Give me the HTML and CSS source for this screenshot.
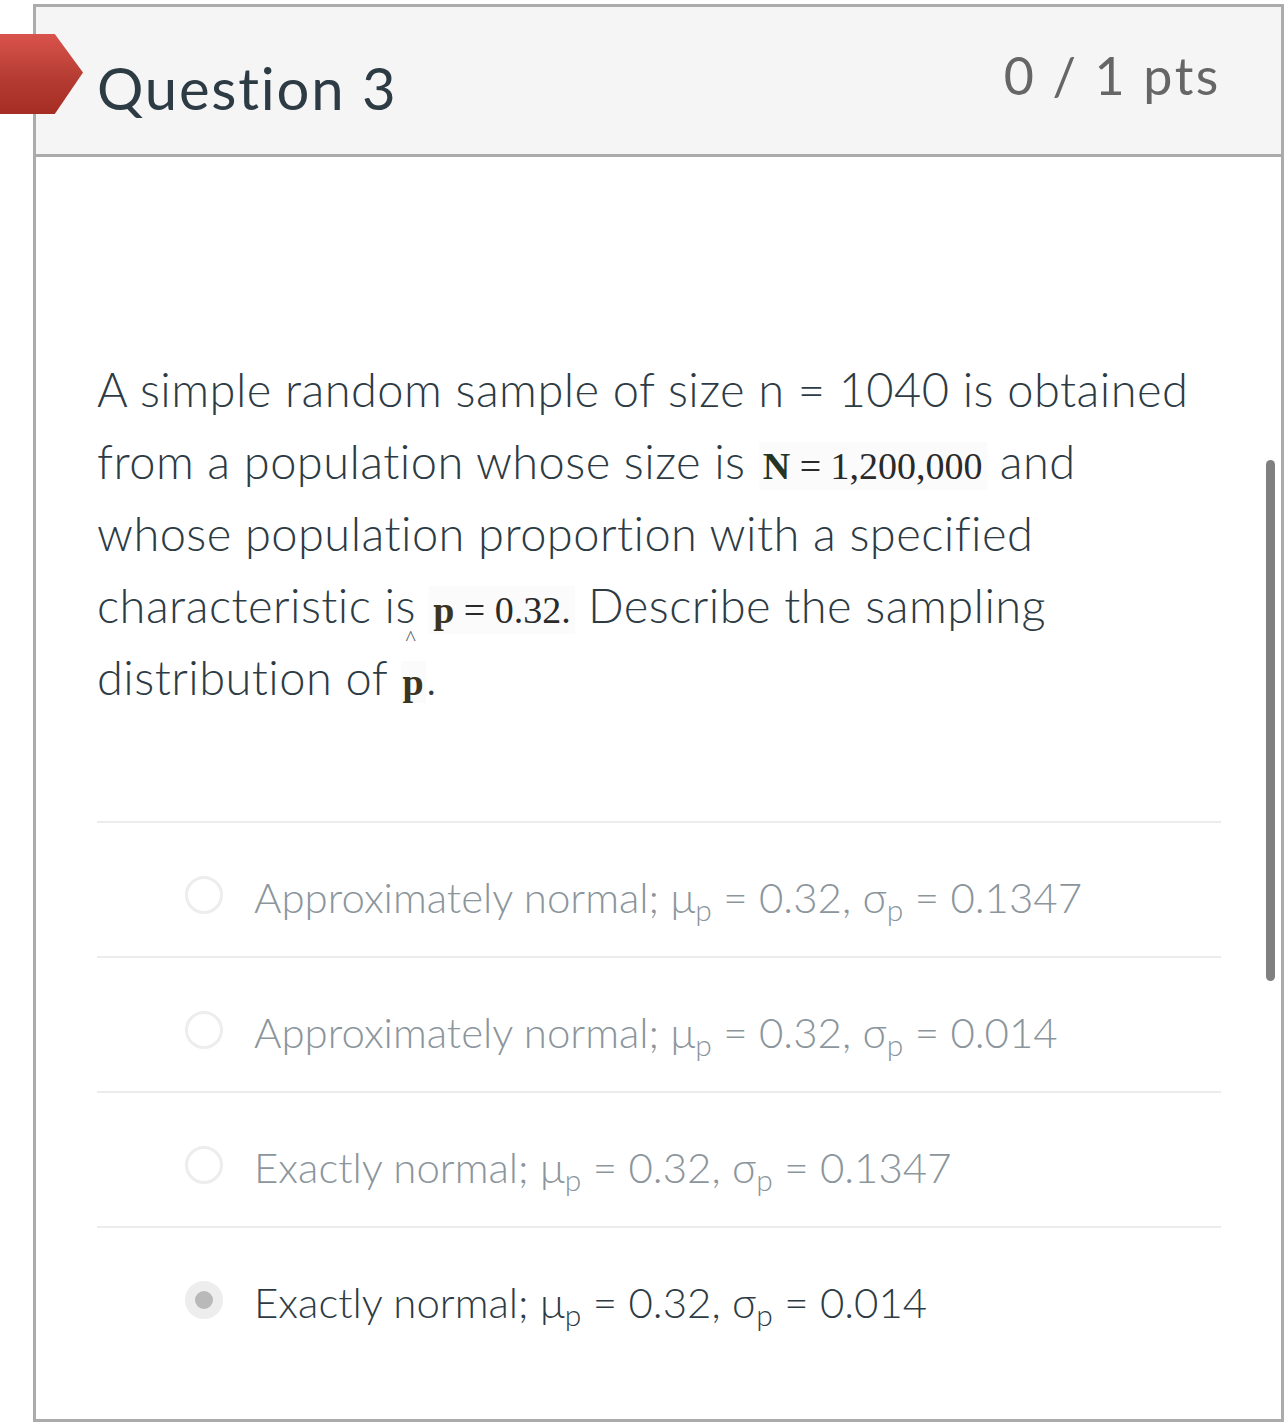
FILE: index.html
```html
<!DOCTYPE html>
<html>
<head>
<meta charset="utf-8">
<link rel="stylesheet" href="styles.css">
</head>
<body>
<div class="card">
  <div class="flag"></div>
  <div class="header">
    <div class="title">Question 3</div>
    <div class="pts">0 / 1 pts</div>
  </div>
  <div class="body">
    <p class="question">A simple random sample of size n = 1040 is obtained from a population whose size is <span class="math big"><b>N</b> = 1,200,000</span> and whose population proportion with a specified characteristic is <span class="math"><b class="pb">p</b> = 0.32.</span> Describe the sampling distribution of <span class="math hat"><b class="pb">p</b><span class="caret">^</span></span>.</p>
    <div class="answers">
      <div class="answer">
        <span class="radio"></span>
        <span class="label">Approximately normal; μ<sub>p</sub> = 0.32, σ<sub>p</sub> = 0.1347</span>
      </div>
      <div class="answer">
        <span class="radio"></span>
        <span class="label">Approximately normal; μ<sub>p</sub> = 0.32, σ<sub>p</sub> = 0.014</span>
      </div>
      <div class="answer">
        <span class="radio"></span>
        <span class="label">Exactly normal; μ<sub>p</sub> = 0.32, σ<sub>p</sub> = 0.1347</span>
      </div>
      <div class="answer selected">
        <span class="radio"><span class="dot"></span></span>
        <span class="label">Exactly normal; μ<sub>p</sub> = 0.32, σ<sub>p</sub> = 0.014</span>
      </div>
    </div>
  </div>
  <div class="scrollbar"></div>
</div>
</body>
</html>
```
FILE: styles.css
```css
html, body {
  margin: 0;
  padding: 0;
  background: #fff;
}
body {
  font-family: Lato, "Open Sans", sans-serif;
  color: #2d3b45;
}
.card {
  position: relative;
  margin: 4px 0 0 33px;
  width: 1251px;
  height: 1418px;
  box-sizing: border-box;
  border: 3px solid #ababab;
}
.flag {
  position: absolute;
  left: -36px;
  top: 27px;
  width: 83px;
  height: 80px;
  background: linear-gradient(#d9534c, #b23a30 60%, #a52d24);
  clip-path: polygon(0 0, 66% 0, 100% 48%, 66% 100%, 0 100%);
}
.header {
  height: 147px;
  background: #f5f5f5;
  border-bottom: 3px solid #ababab;
  display: flex;
  align-items: flex-start;
  justify-content: space-between;
  padding: 0 60px 0 61px;
}
.title {
  font-size: 58px;
  line-height: 60px;
  letter-spacing: 1.8px;
  margin-top: 51px;
  color: #2d3b45;
}
.pts {
  font-size: 52px;
  line-height: 60px;
  letter-spacing: 2.6px;
  margin-top: 38px;
  color: #666;
}
.body {
  padding: 196px 60px 0 61px;
}
.question {
  margin: 0;
  max-width: 1105px;
  font-size: 47px;
  line-height: 72px;
  font-weight: 300;
  letter-spacing: 0.45px;
}
.math {
  font-family: "Liberation Serif", serif;
  font-size: 38px;
  line-height: 1;
  letter-spacing: 0;
  color: #2a2a2a;
  background: #fbfbfb;
  padding: 3px 4px;
}
.math b { font-weight: 700; color: #243524; }
.math .pb { color: #3b3420; }
.hat {
  position: relative;
  padding: 0 2px;
}
.caret {
  position: absolute;
  left: 5px;
  top: -34px;
  font-size: 22px;
  color: #666;
}
.answers {
  margin-top: 108px;
}
.answer {
  border-top: 2px solid #ececec;
  height: 133px;
  display: flex;
  align-items: flex-start;
  padding-left: 88px;
}
.radio {
  box-sizing: border-box;
  width: 38px;
  height: 38px;
  border: 3px solid #ededed;
  border-radius: 50%;
  margin-top: 53px;
  flex: none;
  display: flex;
  align-items: center;
  justify-content: center;
}
.selected .radio {
  background: #ededed;
}
.dot {
  width: 18px;
  height: 18px;
  border-radius: 50%;
  background: #b9b9b9;
}
.label {
  margin-left: 31px;
  margin-top: 50px;
  font-size: 42px;
  line-height: 48px;
  font-weight: 300;
  color: #8b959c;
}
.selected .label {
  color: #2d3b45;
}
.label sub {
  font-size: 30px;
  line-height: 0;
  vertical-align: -8px;
}
.scrollbar {
  position: absolute;
  left: 1230px;
  top: 453px;
  width: 9px;
  height: 521px;
  border-radius: 5px;
  background: #808080;
}
```
